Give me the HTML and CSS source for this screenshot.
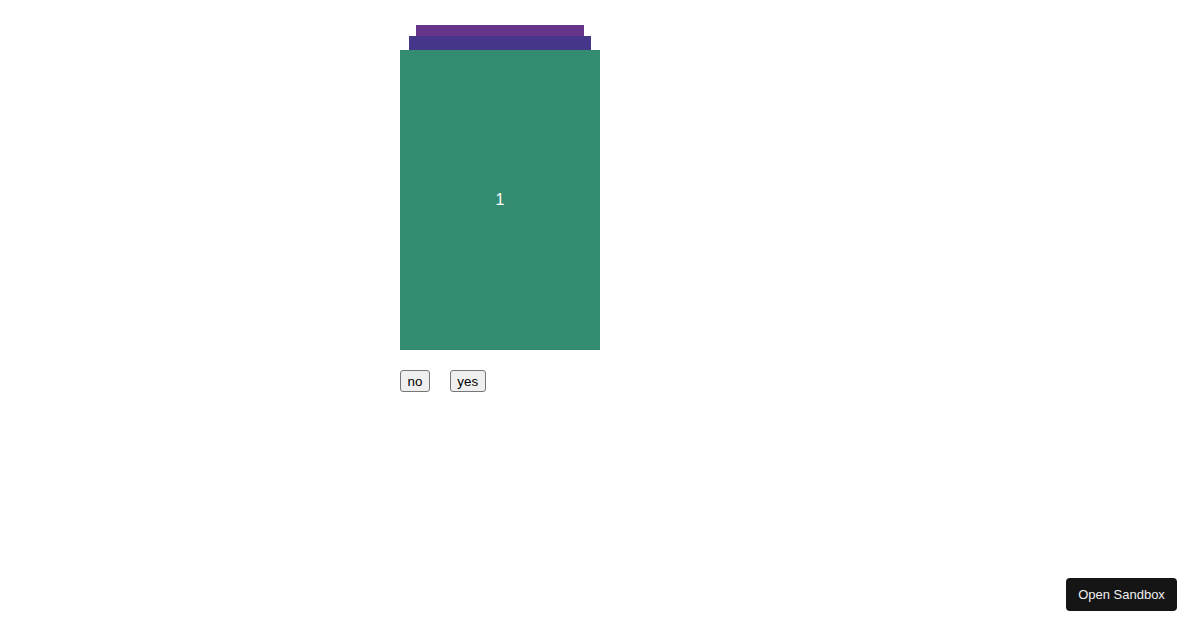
FILE: index.html
```html
<!DOCTYPE html>
<html>
<head>
<meta charset="utf-8">
<link rel="stylesheet" href="styles.css">
</head>
<body>
<main class="page">
  <div class="stack">
    <div class="card-back card-back-far"></div>
    <div class="card-back card-back-near"></div>
    <div class="card-front">1</div>
  </div>
  <div class="actions">
    <button class="btn">no</button>
    <button class="btn">yes</button>
  </div>
</main>
<a class="sandbox">Open Sandbox</a>
</body>
</html>
```
FILE: styles.css
```css
html, body {
  margin: 0;
  height: 100%;
  background: #ffffff;
  font-family: "Liberation Sans", Arial, sans-serif;
}
.page {
  padding: 25px 0 0 400px;
}
.stack {
  position: relative;
  width: 200px;
  padding-top: 25px;
}
.card-back {
  position: absolute;
  height: 300px;
}
.card-back-far {
  top: 0;
  left: 16px;
  width: 168px;
  background: #663489;
}
.card-back-near {
  top: 11px;
  left: 9px;
  width: 182px;
  background: #46368a;
}
.card-front {
  position: relative;
  width: 200px;
  height: 300px;
  background: #338b70;
  color: #ffffff;
  font-size: 16px;
  display: flex;
  align-items: center;
  justify-content: center;
  padding-bottom: 1px;
  box-sizing: border-box;
}
.actions {
  display: flex;
  gap: 20px;
  margin-top: 20px;
}
.btn {
  font-family: "Liberation Sans", Arial, sans-serif;
  font-size: 13.333px;
  height: 22px;
  padding: 1px 6.5px;
  background: #efefef;
  border: 1px solid #767676;
  border-radius: 3px;
  color: #000;
}
.sandbox {
  position: fixed;
  right: 23px;
  bottom: 19px;
  width: 111px;
  height: 33px;
  box-sizing: border-box;
  background: #151515;
  color: #f0f0f0;
  border-radius: 4px;
  font-size: 13px;
  display: flex;
  align-items: center;
  justify-content: center;
}
```
